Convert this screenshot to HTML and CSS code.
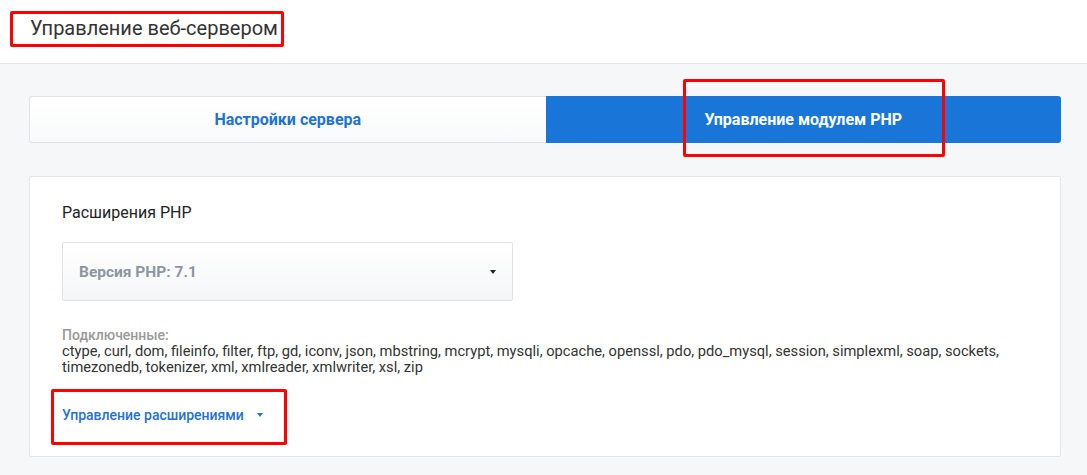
FILE: index.html
```html
<!DOCTYPE html>
<html>
<head>
    <title>Управление веб-сервером</title>
    <meta charset="utf-8" />
    <link rel="stylesheet" href="styles.css">
</head>
<body>
    <div class="header">
        <h1>Управление веб-сервером</h1>
        <div class="mark mark-title"></div>
    </div>
    <div class="main">
        <div class="tabs">
            <div class="tab">Настройки сервера</div>
            <div class="tab active">Управление модулем PHP</div>
            <div class="mark mark-tab"></div>
        </div>
        <div class="card">
            <div class="card-title">Расширения PHP</div>
            <div class="select">
                <span>Версия PHP: 7.1</span>
                <span class="caret"></span>
            </div>
            <div class="label">Подключенные:</div>
            <div class="list">ctype, curl, dom, fileinfo, filter, ftp, gd, iconv, json, mbstring, mcrypt, mysqli, opcache, openssl, pdo, pdo_mysql, session, simplexml, soap, sockets, timezonedb, tokenizer, xml, xmlreader, xmlwriter, xsl, zip</div>
            <div class="manage">
                <span>Управление расширениями</span>
                <span class="caret blue"></span>
                <div class="mark mark-manage"></div>
            </div>
        </div>
    </div>
</body>
</html>
```

FILE: styles.css
```css
body {
    margin: 0;
    background-color: #f6f7f9;
    font-family: Roboto, "Liberation Sans", sans-serif;
    color: #333;
    height: 475px;
    overflow: hidden;
}
.header {
    position: relative;
    height: 63px;
    background-color: #fff;
    border-bottom: 1px solid #e3e6ea;
}
h1 {
    margin: 0;
    padding: 16px 0 0 30px;
    font-size: 20px;
    font-weight: 400;
    line-height: 24px;
    color: #333;
}
.main {
    padding: 32px 26px 0 29px;
}
.tabs {
    position: relative;
    display: flex;
    height: 47px;
}
.tab {
    flex: 1;
    display: flex;
    align-items: center;
    justify-content: center;
    font-size: 16px;
    font-weight: 700;
    color: #1f72d4;
    background: linear-gradient(#fff, #f9fafb);
    border: 1px solid #e0e4e8;
    border-right: none;
    border-radius: 3px 0 0 3px;
}
.tab.active {
    color: #fff;
    background: #1976d8;
    border: none;
    border-radius: 0 3px 3px 0;
}
.card {
    margin-top: 33px;
    height: 254px;
    padding: 25px 32px 0 32px;
    background-color: #fff;
    border: 1px solid #e2e6ea;
    border-radius: 2px;
}
.card-title {
    font-size: 16px;
    line-height: 22px;
    color: #222;
}
.select {
    margin-top: 18px;
    width: 417px;
    height: 57px;
    padding: 0 16px;
    display: flex;
    align-items: center;
    justify-content: space-between;
    font-size: 15.5px;
    font-weight: 700;
    color: #8d969f;
    background: linear-gradient(#fff, #f5f6f8);
    border: 1px solid #dfe3e7;
    border-radius: 2px;
}
.caret {
    width: 0;
    height: 0;
    border-left: 3px solid transparent;
    border-right: 3px solid transparent;
    border-top: 4px solid #222;
}
.caret.blue {
    border-top-color: #1f72d4;
    margin-left: 13px;
}
.label {
    margin-top: 26px;
    font-size: 14px;
    font-weight: 500;
    line-height: 16px;
    color: #999;
}
.list {
    font-size: 14.7px;
    line-height: 16px;
    color: #333;
}
.manage {
    position: relative;
    margin-top: 31px;
    display: flex;
    align-items: center;
    font-size: 14px;
    font-weight: 500;
    line-height: 18px;
    color: #1f72d4;
}
.mark {
    position: absolute;
    border: 3px solid #f00;
    border-radius: 2px;
}
.mark-title {
    left: 10px;
    top: 11px;
    width: 268px;
    height: 30px;
}
.mark-tab {
    left: 654px;
    top: -17px;
    width: 256px;
    height: 72px;
}
.mark-manage {
    left: -11px;
    top: -17px;
    width: 230px;
    height: 50px;
}
```
